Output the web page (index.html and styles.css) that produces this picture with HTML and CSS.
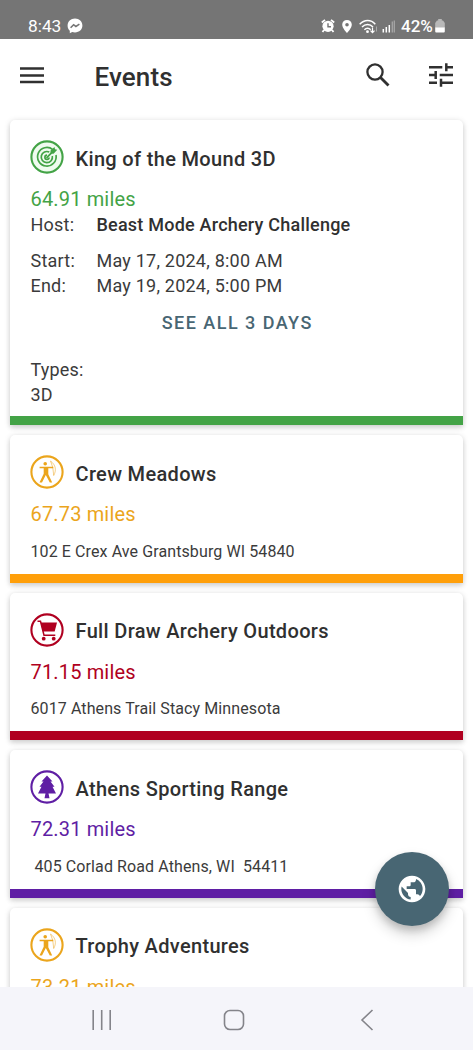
FILE: index.html
```html
<!DOCTYPE html>
<html lang="en">
<head>
<meta charset="utf-8">
<title>Events</title>
<link rel="stylesheet" href="styles.css">
</head>
<body>
<svg class="defs" width="0" height="0" aria-hidden="true">
  <symbol id="archer" viewBox="0 0 34 34">
    <circle cx="17" cy="17" r="15.6" fill="none" stroke="currentColor" stroke-width="2.1"/>
    <circle cx="15.200" cy="8.800" r="1.800" fill="currentColor"/>
    <path d="M9.600 11.800h13.600v1.500h-4.900v5.900l3.900 8.300h-2.400l-4-7.600-3.800 7.600H9.500l4.200-8.700v-5.500H9.600z" fill="currentColor"/>
    <path d="M20.500 6c5.500 4 6 9.500 3.200 14.500M20.500 6l2.300 6.500.9 8" fill="none" stroke="currentColor" stroke-width=".7" opacity=".75"/>
  </symbol>
</svg>
<div class="status">
  <span class="clock">8:43</span>
  <svg class="messenger" width="16" height="16" viewBox="0 0 16 16"><path d="M8 .6C3.700.6.6 3.700.6 7.700c0 2.100.8 3.800 2.200 5.100v2.500l2.400-1.200c.9.3 1.800.4 2.800.4 4.300 0 7.400-3 7.400-6.900S12.300.6 8 .6z" fill="#fff"/><path d="M3.600 9.800l3-3.100 2.300 1.800 3.500-2.300" fill="none" stroke="#757575" stroke-width="1.600"/></svg>
  <div class="indicators">
    <svg width="14" height="14" viewBox="0 0 14 14"><path d="M.8 3.500L4 .9M13.200 3.500L10 .9M3 11l-1.500 2M11 11l1.500 2" stroke="#fff" stroke-width="1.800"/><circle cx="7" cy="7.300" r="5.600" fill="#fff"/><path d="M7 4.200v3.500h3" fill="none" stroke="#757575" stroke-width="1.400"/></svg>
    <svg class="pin" width="10" height="13" viewBox="0 0 10 13"><path fill-rule="evenodd" d="M5 0C2.200 0 .2 2 .2 4.800.2 8.200 5 13 5 13s4.800-4.800 4.800-8.200C9.800 2 7.800 0 5 0zm0 3a1.800 1.800 0 1 1 0 3.600A1.800 1.800 0 0 1 5 3z" fill="#fff"/></svg>
    <svg class="wifi" width="19" height="15" viewBox="0 0 19 15"><path d="M.7 5.200C5.300.2 12 .2 16.300 5.200M3 8c3.300-3.500 7.800-3.500 11 0M5.400 10.700c1.900-2 4.400-2 6.300 0" fill="none" stroke="#fff" stroke-width="1.500"/><circle cx="8.500" cy="12.700" r="1.400" fill="#fff"/><path d="M13.500 8.500v5.200m-2-2l2 2 2-2" fill="none" stroke="#fff" stroke-width="1.200"/><path d="M17.500 7.500v5" stroke="#aaa" stroke-width="1"/></svg>
    <svg class="signal" width="13" height="13" viewBox="0 0 13 13"><path d="M1.300 9v3.500M4.300 7v5.500M7.300 5v7.500" stroke="#fff" stroke-width="1.500"/><path d="M10.300 1.500v11M12.300.5v12" stroke="#a6a6a6" stroke-width="1.300"/></svg>
    <span class="percent">42%</span>
    <svg class="battery" width="10" height="14" viewBox="0 0 10 14"><path d="M3.200 0h3.600v1.500H8L9.800 4v5H.2V4L2 1.500h1.200z" fill="#b8b8b8"/><path d="M.2 8.500h9.600v4q0 1-1 1H1.200q-1 0-1-1z" fill="#fff"/></svg>
  </div>
</div>
<header class="appbar">
  <svg class="menu" width="24" height="17" viewBox="0 0 24 17"><path d="M0 1.500h24M0 8.500h24M0 15h24" stroke="#303030" stroke-width="2.400"/></svg>
  <h1>Events</h1>
  <svg class="search" width="24" height="24" viewBox="0 0 24 24"><circle cx="9" cy="9" r="7.600" fill="none" stroke="#303030" stroke-width="2.300"/><path d="M14.500 14.500l8 8" stroke="#303030" stroke-width="2.800"/></svg>
  <svg class="tune" width="24" height="24" viewBox="0 0 24 24"><path d="M0 4.300h13.300M17.300 4.300H24M17.300.3v8M0 12h6.700M10.700 12H24M6.700 8v8M0 19.800h8M12 19.800h12M12 15.700v8" fill="none" stroke="#303030" stroke-width="2.500"/></svg>
</header>
<main class="list">
  <article class="card green">
    <div class="head">
      <svg width="34" height="34" viewBox="0 0 34 34"><circle cx="17" cy="17" r="15.600" fill="#effbef" stroke="currentColor" stroke-width="2.100"/><g fill="none" stroke="currentColor" stroke-width="1.700"><path d="M22.800 9.600A9.300 9.300 0 1 0 26 15"/><path d="M19.300 12.100A5.600 5.600 0 1 0 22.300 16"/><path d="M17 15.200a2.100 2.100 0 1 0 2.100 2.300"/></g><path d="M16.500 17.800L22 12.300" stroke="currentColor" stroke-width="1.800"/><path d="M20.500 13.500v-3l4-3.500.5 2.300 2.300.5-3.700 3.900z" fill="currentColor"/></svg>
      <h2>King of the Mound 3D</h2>
    </div>
    <p class="miles">64.91 miles</p>
    <dl class="facts">
      <dt>Host:</dt><dd class="host">Beast Mode Archery Challenge</dd>
      <dt>Start:</dt><dd>May 17, 2024, 8:00 AM</dd>
      <dt>End:</dt><dd>May 19, 2024, 5:00 PM</dd>
    </dl>
    <a class="more">SEE ALL 3 DAYS</a>
    <p class="types">Types:<br>3D</p>
  </article>
  <article class="card orange">
    <div class="head"><svg width="34" height="34"><use href="#archer"/></svg><h2>Crew Meadows</h2></div>
    <p class="miles">67.73 miles</p>
    <p class="address">102 E Crex Ave Grantsburg WI 54840</p>
  </article>
  <article class="card red">
    <div class="head">
      <svg width="34" height="34" viewBox="0 0 34 34"><circle cx="17" cy="17" r="15.600" fill="none" stroke="currentColor" stroke-width="2.100"/><path d="M7.500 8.300h3l3.500 14h11.300" fill="none" stroke="currentColor" stroke-width="1.500"/><path d="M10.600 9.500h16.400l-2.300 9H12.900z" fill="currentColor"/><circle cx="13.700" cy="25.700" r="1.900" fill="currentColor"/><circle cx="23.700" cy="25.700" r="1.900" fill="currentColor"/></svg>
      <h2>Full Draw Archery Outdoors</h2>
    </div>
    <p class="miles">71.15 miles</p>
    <p class="address">6017 Athens Trail Stacy Minnesota</p>
  </article>
  <article class="card purple">
    <div class="head">
      <svg width="34" height="34" viewBox="0 0 34 34"><circle cx="17" cy="17" r="15.600" fill="none" stroke="currentColor" stroke-width="2.100"/><path d="M17 5.500l5.500 6h-2l4 5.300h-2l3.500 6.700h-7.500l1 4.700h-5l1-4.700H8l3.500-6.700h-2l4-5.300h-2z" fill="currentColor"/></svg>
      <h2>Athens Sporting Range</h2>
    </div>
    <p class="miles">72.31 miles</p>
    <p class="address indent">405 Corlad Road Athens, WI&nbsp; 54411</p>
  </article>
  <article class="card orange">
    <div class="head"><svg width="34" height="34"><use href="#archer"/></svg><h2>Trophy Adventures</h2></div>
    <p class="miles">73.21 miles</p>
    <p class="address"></p>
  </article>
</main>
<div class="fab">
  <svg width="32" height="32" viewBox="0 0 24 24"><path d="M12 2C6.480 2 2 6.480 2 12s4.480 10 10 10 10-4.480 10-10S17.520 2 12 2zm-1 17.930c-3.950-.49-7-3.850-7-7.930 0-.62.080-1.210.21-1.790L9 15v1c0 1.100.9 2 2 2v1.930zm6.900-2.540c-.26-.81-1-1.390-1.900-1.390h-1v-3c0-.55-.45-1-1-1H8v-2h2c.55 0 1-.45 1-1V7h2c1.100 0 2-.9 2-2v-.41c2.930 1.190 5 4.060 5 7.410 0 2.080-.8 3.970-2.100 5.390z" fill="#fff"/></svg>
</div>
<nav class="navbar">
  <svg width="20" height="20" viewBox="0 0 20 20"><path d="M1.200 0v20M9.700 0v20M18.200 0v20" stroke="#84848a" stroke-width="1.600"/></svg>
  <svg class="home" width="22" height="22" viewBox="0 0 22 22"><rect x="1.500" y="1.500" width="19" height="19" rx="5.500" fill="none" stroke="#84848a" stroke-width="1.600"/></svg>
  <svg width="14" height="22" viewBox="0 0 14 22"><path d="M12.500 1L2 11l10.500 10" fill="none" stroke="#84848a" stroke-width="1.600"/></svg>
</nav>
</body>
</html>
```
FILE: styles.css
```css
* { box-sizing: border-box; margin: 0; padding: 0; }
body {
  width: 473px;
  height: 1050px;
  overflow: hidden;
  display: flex;
  flex-direction: column;
  background: #fff;
  color: #303030;
  font-family: Roboto, sans-serif;
}
svg { display: block; flex: none; }
.defs { position: absolute; }
.status {
  flex: none;
  height: 38.5px;
  padding: 14px 28px 0;
  display: flex;
  align-items: center;
  background: #757575;
  color: #fff;
  font-size: 17px;
  font-weight: 500;
  line-height: 25px;
}
.clock { width: 33px; font-weight: 400; font-size: 17.3px; }
.messenger { margin-left: 6px; }
.indicators { display: flex; align-items: center; margin-left: auto; }
.pin { margin-left: 7px; }
.wifi { margin-left: 7px; }
.signal { margin-left: 4px; }
.percent { width: 31px; margin-left: 6px; }
.battery { margin-left: 3px; }
.appbar {
  flex: none;
  height: 73.5px;
  padding: 0 21px 0 19.5px;
  display: flex;
  align-items: center;
}
.appbar h1 {
  flex: 1;
  margin-left: 51px;
  padding-top: 3px;
  font-size: 26px;
  font-weight: 500;
  line-height: 30px;
  letter-spacing: .1px;
}
.search { margin-right: 39px; }
.menu { margin-top: 0; }
.tune { margin-right: -1px; }
.list {
  flex: 1;
  min-height: 0;
  overflow: hidden;
  display: flex;
  flex-direction: column;
  gap: 10px;
  padding: 8px 10px 0 9.5px;
}
.card {
  flex: none;
  padding: 20px 21px 9px;
  border-bottom: 9px solid currentColor;
  border-radius: 5px 5px 0 0;
  background: #fff;
  box-shadow: 0 1px 6px rgba(0, 0, 0, .14), 0 3px 5px rgba(0, 0, 0, .1);
}
.green { color: #43a346; }
.orange { color: #ff9f0a; }
.orange .head, .orange .miles { color: #eba51c; }
.red { color: #b00020; }
.purple { color: #5f1ea4; }
.head { display: flex; align-items: center; height: 34px; }
.head svg { margin-left: -.5px; }
.head h2 {
  margin-left: 11.5px;
  padding-top: 3px;
  color: #303030;
  font-size: 20px;
  font-weight: 500;
  line-height: 28px;
  letter-spacing: .33px;
  white-space: nowrap;
}
.miles { margin-top: 12px; font-size: 20px; line-height: 26px; letter-spacing: .16px; }
.facts {
  display: grid;
  grid-template-columns: 66px 1fr;
  grid-template-rows: 36px 25px 25px;
  color: #3b3b3b;
  font-size: 18px;
  line-height: 25px;
  letter-spacing: .22px;
}
.host { color: #303030; font-weight: 500; }
.more {
  display: block;
  margin-top: 11.5px;
  padding-left: 2px;
  color: #486673;
  font-size: 18px;
  font-weight: 500;
  line-height: 25px;
  letter-spacing: 1.470px;
  text-align: center;
}
.types { margin-top: 22.5px; color: #3b3b3b; font-size: 18px; line-height: 25px; letter-spacing: .2px; }
.address {
  margin-top: 11.5px;
  height: 26px;
  color: #3b3b3b;
  font-size: 16px;
  line-height: 26px;
  letter-spacing: .1px;
  white-space: nowrap;
}
.indent { padding-left: 4px; }
.fab {
  position: absolute;
  left: 375px;
  top: 851.5px;
  width: 74px;
  height: 74px;
  border-radius: 50%;
  display: flex;
  align-items: center;
  justify-content: center;
  background: #486673;
  box-shadow: 0 8px 14px rgba(0, 0, 0, .18), 0 4px 7px rgba(0, 0, 0, .14);
}
.navbar {
  flex: none;
  height: 63px;
  padding: 2px 99px 0 92px;
  display: flex;
  align-items: center;
  justify-content: space-between;
  background: #f5f5fa;
}
.home { margin-right: 4px; }
```
